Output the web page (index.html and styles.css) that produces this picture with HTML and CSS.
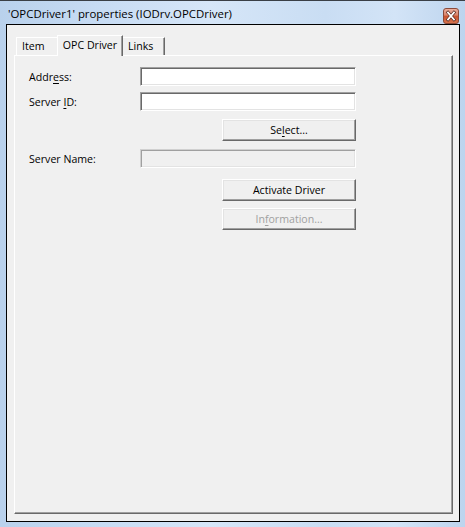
FILE: index.html
```html
<!DOCTYPE html>
<html>
<head>
<meta charset="utf-8">
<link rel="stylesheet" href="styles.css">
</head>
<body>
<div class="window">
  <div class="titlebar">
    <span class="title">'OPCDriver1' properties (IODrv.OPCDriver)</span>
    <span class="close">
      <svg width="16" height="16" viewBox="0 0 16 16">
        <defs>
          <linearGradient id="cg" x1="0" y1="0" x2="0" y2="1">
            <stop offset="0" stop-color="#eeb2a2"/>
            <stop offset="0.45" stop-color="#d8836a"/>
            <stop offset="0.5" stop-color="#c8522f"/>
            <stop offset="1" stop-color="#d8764f"/>
          </linearGradient>
        </defs>
        <rect x="0.5" y="0.5" width="15" height="15" rx="2.5" fill="url(#cg)" stroke="#8a4a3a"/>
        <path d="M5 4.5 L11 11.5 M11 4.5 L5 11.5" stroke="#5a2a20" stroke-width="3.2" stroke-linecap="square"/>
        <path d="M5 4.5 L11 11.5 M11 4.5 L5 11.5" stroke="#ffffff" stroke-width="1.8" stroke-linecap="square"/>
      </svg>
    </span>
  </div>
  <div class="client">
    <div class="tabs">
      <div class="tab tab-item">Item</div>
      <div class="tab tab-active">OPC Driver</div>
      <div class="tab tab-links">Links</div>
    </div>
    <div class="panel">
      <div class="form">
        <label class="lbl r1">Addr<u>e</u>ss:</label>
        <div class="field r1"></div>
        <label class="lbl r2">Server <u>I</u>D:</label>
        <div class="field r2"></div>
        <div class="btn r3">Se<u>l</u>ect...</div>
        <label class="lbl r4">Server Name:</label>
        <div class="field disabled r4"></div>
        <div class="btn r5">Activate Driver</div>
        <div class="btn btn-disabled r6">In<u>f</u>ormation...</div>
      </div>
    </div>
  </div>
</div>
</body>
</html>
```
FILE: styles.css
```css
* { box-sizing: border-box; }
html, body { margin: 0; padding: 0; }
body {
  width: 465px;
  height: 527px;
  overflow: hidden;
  font-family: "Open Sans", "Noto Sans", "Liberation Sans", sans-serif;
  font-size: 10.6px;
  color: #000;
}
.window {
  width: 465px;
  height: 527px;
  display: flex;
  flex-direction: column;
  border-top: 1px solid #3a3f46;
  background: linear-gradient(to right, #b9d1ec 0%, #c6dbf3 20%, #d6e6f8 45%, #c9ddf3 70%, #d3e4f7 85%, #bdd4ee 100%);
}
.titlebar {
  height: 23px;
  display: flex;
  align-items: center;
  padding-left: 8px;
  padding-right: 6px;
}
.title {
  flex: 1;
  font-size: 11.4px;
  color: #000;
  white-space: nowrap;
  margin-top: 2px;
}
.close {
  width: 16px;
  height: 16px;
  margin-top: 6px;
  display: flex;
}
.close svg { display: block; }
.client {
  flex: 1;
  margin: 0 5px 5px 6px;
  border: 1px solid #000;
  background: #f0f0f0;
  padding: 10px 6px 7px 7px;
  display: flex;
  flex-direction: column;
}
.tabs {
  height: 20px;
  display: flex;
  align-items: flex-end;
  padding-left: 2px;
  position: relative;
  z-index: 1;
}
.tab {
  height: 18px;
  background: #f0f0f0;
  border-top: 1px solid #fff;
  border-left: 1px solid #fff;
  border-right: 1px solid #696969;
  box-shadow: inset -1px 0 0 #a0a0a0;
  display: flex;
  align-items: center;
  justify-content: center;
  padding-bottom: 1px;
}
.tab-item { width: 41px; border-right: none; box-shadow: none; justify-content: flex-start; padding-left: 5px; }
.tab-active {
  width: 66px;
  height: 21px;
  margin-bottom: -1px;
  padding-bottom: 3px;
}
.tab-links { width: 42px; border-left: none; justify-content: flex-start; padding-left: 5px; }
.panel {
  flex: 1;
  background: #f0f0f0;
  border-top: 1px solid #fff;
  border-left: 1px solid #fff;
  border-right: 1px solid #696969;
  border-bottom: 1px solid #696969;
  box-shadow: inset -1px -1px 0 #a0a0a0;
  padding: 11px 0 0 14px;
}
.form {
  display: grid;
  grid-template-columns: 111px 82px 134px;
  align-items: center;
}
.lbl { grid-column: 1; }
.field {
  grid-column: 2 / 4;
  height: 19px;
  background: #fff;
  border: 1px solid;
  border-color: #a0a0a0 #fff #fff #a0a0a0;
  box-shadow: inset 1px 1px 0 #696969, inset -1px -1px 0 #e3e3e3;
}
.field.disabled { background: #f0f0f0; box-shadow: inset 1px 1px 0 #a0a0a0, inset -1px -1px 0 #e3e3e3; border-color: #d0d0d0 #fff #fff #d0d0d0; }
.btn {
  grid-column: 3;
  height: 22px;
  background: #f0f0f0;
  border: 1px solid;
  border-color: #fff #696969 #696969 #fff;
  box-shadow: inset -1px -1px 0 #a0a0a0, inset 1px 1px 0 #e3e3e3;
  display: flex;
  align-items: center;
  justify-content: center;
}
.btn-disabled { color: #a0a0a0; }
.r1 { grid-row: 1; }
.r2 { grid-row: 2; margin-top: 6px; }
.r3 { grid-row: 3; margin-top: 8px; }
.r4 { grid-row: 4; margin-top: 8px; }
.r5 { grid-row: 5; margin-top: 11px; }
.r6 { grid-row: 6; margin-top: 7px; }
u { text-decoration: underline; text-underline-offset: 2px; }
```
